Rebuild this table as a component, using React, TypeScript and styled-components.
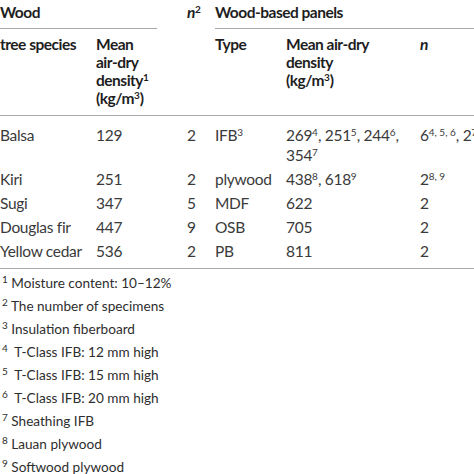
import React from "react";
import styled, { createGlobalStyle } from "styled-components";

const Global = createGlobalStyle`
  html, body { margin: 0; padding: 0; background: #fff; }
  body { font-family: "Lato", "Open Sans", sans-serif; color: #3a3a3a; }
`;

const Page = styled.div`
  width: 474px;
  height: 474px;
  overflow: hidden;
  background: #fff;
`;

const Table = styled.div`
  display: grid;
  grid-template-columns: 96px 91px 28px 71px 134px 1fr;
  font-size: 15.5px;
  letter-spacing: -0.3px;
`;

const GroupHead = styled.div<{ $span: string; $trim?: number }>`
  grid-column: ${(p) => p.$span};
  font-weight: 700;
  letter-spacing: -0.5px;
  color: #1e1e1e;
  line-height: 18px;
  padding: 3px 0 7px;
  margin-right: ${(p) => p.$trim ?? 0}px;
  border-bottom: ${(p) => (p.$trim !== undefined ? "1.5px solid #a8a8a8" : "none")};
`;

const Plain = styled.div<{ $span: string }>`
  grid-column: ${(p) => p.$span};
  font-weight: 700;
  color: #1e1e1e;
  line-height: 18px;
  padding: 3px 0 8px;
`;

const ColHead = styled.div`
  font-weight: 700;
  letter-spacing: -0.5px;
  color: #1e1e1e;
  line-height: 18px;
  padding: 6px 0 8px;
  border-bottom: 1.5px solid #a8a8a8;
`;

const Cell = styled.div<{ $first?: boolean; $last?: boolean }>`
  line-height: 20px;
  padding-top: ${(p) => (p.$first ? 9 : 2)}px;
  padding-bottom: ${(p) => (p.$last ? 7 : 2)}px;
  border-bottom: ${(p) => (p.$last ? "1.5px solid #a8a8a8" : "none")};
  white-space: nowrap;
`;

const Wrap = styled(Cell)`
  white-space: normal;
`;

const Sup = styled.sup`
  font-size: 10px;
  line-height: 0;
  vertical-align: 0.55em;
  letter-spacing: 0;
`;

const Italic = styled.span`
  font-style: italic;
`;

const Notes = styled.div`
  padding-top: 3px;
  font-size: 13.6px;
  letter-spacing: 0;
  line-height: 23px;
  color: #2e2e2e;
`;

const Note = styled.div`
  white-space: pre;
  padding-left: 2px;
`;

type Row = { sp: string; d: React.ReactNode; n: string; t: React.ReactNode; pd: React.ReactNode; pn: React.ReactNode };

const rows: Row[] = [
  {
    sp: "Balsa",
    d: "129",
    n: "2",
    t: (
      <>
        IFB<Sup>3</Sup>
      </>
    ),
    pd: (
      <>
        269<Sup>4</Sup>, 251<Sup>5</Sup>, 244<Sup>6</Sup>, 354<Sup>7</Sup>
      </>
    ),
    pn: (
      <>
        6<Sup>4, 5, 6</Sup>, 2<Sup>7</Sup>
      </>
    ),
  },
  {
    sp: "Kiri",
    d: "251",
    n: "2",
    t: "plywood",
    pd: (
      <>
        438<Sup>8</Sup>, 618<Sup>9</Sup>
      </>
    ),
    pn: (
      <>
        2<Sup>8, 9</Sup>
      </>
    ),
  },
  { sp: "Sugi", d: "347", n: "5", t: "MDF", pd: "622", pn: "2" },
  { sp: "Douglas fir", d: "447", n: "9", t: "OSB", pd: "705", pn: "2" },
  { sp: "Yellow cedar", d: "536", n: "2", t: "PB", pd: "811", pn: "2" },
];

const notes: [string, string][] = [
  ["1", " Moisture content: 10–12%"],
  ["2", " The number of specimens"],
  ["3", " Insulation fiberboard"],
  ["4", "  T-Class IFB: 12 mm high"],
  ["5", "  T-Class IFB: 15 mm high"],
  ["6", "  T-Class IFB: 20 mm high"],
  ["7", " Sheathing IFB"],
  ["8", " Lauan plywood"],
  ["9", " Softwood plywood"],
];

export default function App() {
  return (
    <Page>
      <Global />
      <Table>
        <GroupHead $span="1 / 3" $trim={30}>
          Wood
        </GroupHead>
        <Plain $span="3 / 4">
          <Italic>n</Italic>
          <Sup>2</Sup>
        </Plain>
        <GroupHead $span="4 / 7" $trim={0}>
          Wood-based panels
        </GroupHead>

        <ColHead>tree species</ColHead>
        <ColHead>
          Mean
          <br />
          air-dry
          <br />
          density<Sup>1</Sup>
          <br />
          (kg/m<Sup>3</Sup>)
        </ColHead>
        <ColHead />
        <ColHead>Type</ColHead>
        <ColHead>
          Mean air-dry
          <br />
          density
          <br />
          (kg/m<Sup>3</Sup>)
        </ColHead>
        <ColHead>
          <Italic>n</Italic>
        </ColHead>

        {rows.map((r, i) => {
          const first = i === 0;
          const last = i === rows.length - 1;
          return (
            <React.Fragment key={r.sp}>
              <Cell $first={first} $last={last}>{r.sp}</Cell>
              <Cell $first={first} $last={last}>{r.d}</Cell>
              <Cell $first={first} $last={last}>{r.n}</Cell>
              <Cell $first={first} $last={last}>{r.t}</Cell>
              <Wrap $first={first} $last={last}>{r.pd}</Wrap>
              <Cell $first={first} $last={last}>{r.pn}</Cell>
            </React.Fragment>
          );
        })}
      </Table>
      <Notes>
        {notes.map(([k, t]) => (
          <Note key={k}>
            <Sup>{k}</Sup>
            {t}
          </Note>
        ))}
      </Notes>
    </Page>
  );
}
